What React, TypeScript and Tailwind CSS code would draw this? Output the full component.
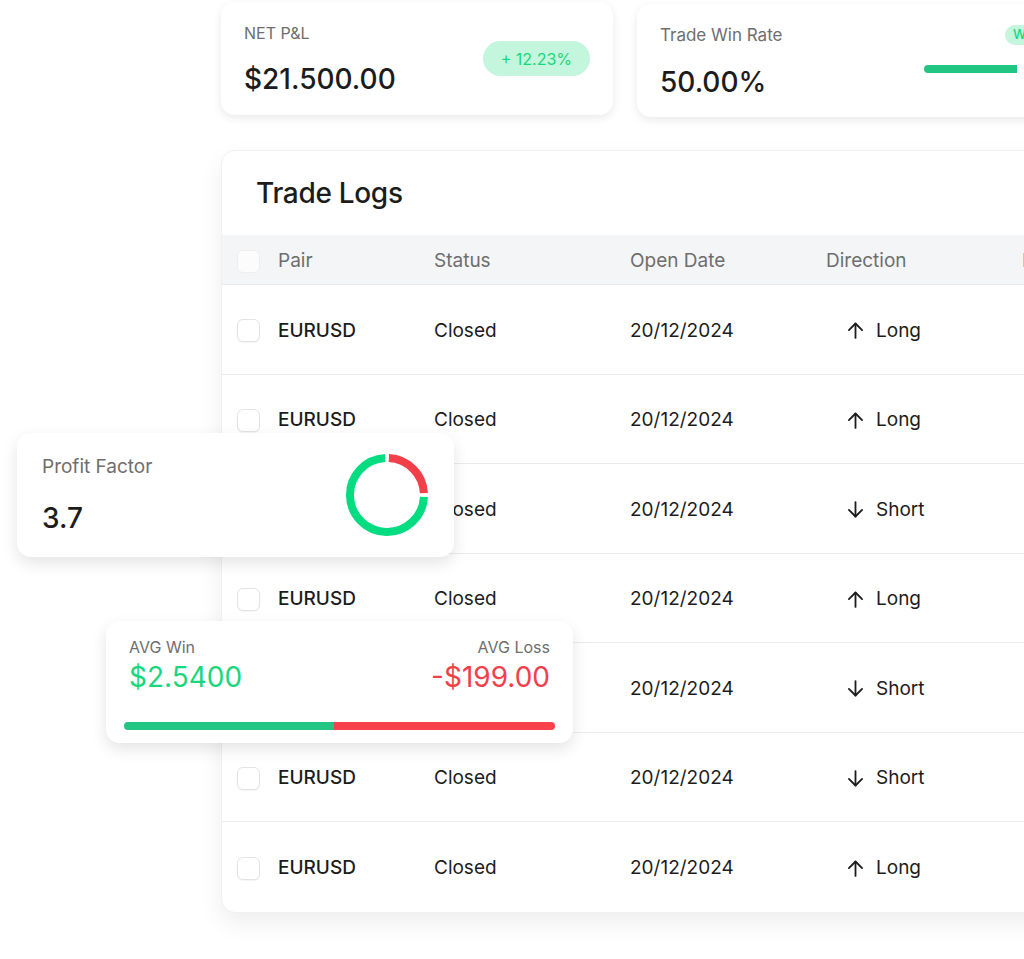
import React from 'react'

// ─── DATA ─────────────────────────────────────────────────────────────────────

interface Trade {
  id: number
  pair: string
  status: string
  openDate: string
  direction: 'long' | 'short'
}

const trades: Trade[] = [
  { id: 1, pair: 'EURUSD', status: 'Closed', openDate: '20/12/2024', direction: 'long' },
  { id: 2, pair: 'EURUSD', status: 'Closed', openDate: '20/12/2024', direction: 'long' },
  { id: 3, pair: 'EURUSD', status: 'Closed', openDate: '20/12/2024', direction: 'short' },
  { id: 4, pair: 'EURUSD', status: 'Closed', openDate: '20/12/2024', direction: 'long' },
  { id: 5, pair: 'EURUSD', status: 'Closed', openDate: '20/12/2024', direction: 'short' },
  { id: 6, pair: 'EURUSD', status: 'Closed', openDate: '20/12/2024', direction: 'short' },
  { id: 7, pair: 'EURUSD', status: 'Closed', openDate: '20/12/2024', direction: 'long' },
]

// ─── ICONS ────────────────────────────────────────────────────────────────────

function Arrow({ down }: { down?: boolean }) {
  return (
    <svg width="17" height="17" viewBox="0 0 16 16" fill="none" stroke="#1c1c1c"
      strokeWidth="1.7" strokeLinecap="round" strokeLinejoin="round"
      className={down ? 'rotate-180' : ''}>
      <path d="M8 1.5V15" />
      <path d="M1.8 7.6L8 1.4L14.2 7.6" />
    </svg>
  )
}

function Donut() {
  return (
    <svg width="84" height="84" viewBox="0 0 84 84" fill="none">
      <path d="M43.9 5.05 A37 37 0 0 1 78.95 40.1" stroke="#f2404a" strokeWidth="8" />
      <path d="M78.95 43.9 A37 37 0 1 1 40.1 5.05" stroke="#03dc80" strokeWidth="8" />
    </svg>
  )
}

function Checkbox() {
  return <div className="w-[23px] h-[23px] rounded-[6px] border border-[#e3e3e3] bg-white shadow-[0_1px_1px_rgba(0,0,0,0.04)]" />
}

// ─── PAGE ─────────────────────────────────────────────────────────────────────

export default function App() {
  return (
    <div className="relative w-[1024px] h-[959px] overflow-hidden bg-white text-[#1c1c1c]"
      style={{ fontFamily: 'Inter, "Noto Sans", sans-serif' }}>

      {/* MAIN COLUMN */}
      <div className="pl-[221px] pt-[2px]">

        {/* STAT CARDS */}
        <div className="flex gap-[24px]">
          <div className="w-[392px] h-[113px] shrink-0 rounded-[14px] bg-white shadow-[0_3px_10px_rgba(0,0,0,0.09)] px-[23px] pt-[21px] flex justify-between">
            <div>
              <p className="text-[16px] leading-[20px] text-[#6e6e6e]">NET P&amp;L</p>
              <p className="mt-[18px] text-[28px] leading-[36px] font-medium">$21.500.00</p>
            </div>
            <div className="mt-[18px] h-[35px] px-[18px] rounded-full bg-[#c4f6dd] text-[#17d67c] text-[16px] flex items-center">
              + 12.23%
            </div>
          </div>

          <div className="w-[460px] h-[113px] shrink-0 mt-[2px] rounded-[14px] bg-white shadow-[0_3px_10px_rgba(0,0,0,0.09)] px-[23px] pt-[21px] flex">
            <div className="w-[264px] shrink-0">
              <p className="text-[17px] leading-[20px] text-[#6e6e6e]">Trade Win Rate</p>
              <p className="mt-[19px] text-[28px] leading-[36px] font-medium">50.00%</p>
            </div>
            <div className="flex flex-col">
              <div className="ml-[81px] self-start h-[20px] px-[8px] rounded-full bg-[#c4f6dd] text-[#17d67c] text-[13px] font-medium flex items-center">Win</div>
              <div className="mt-[20px] flex gap-[8px]">
                <div className="w-[93px] h-[8px] rounded-l-full bg-[#22c683]" />
                <div className="w-[93px] h-[8px] rounded-r-full bg-[#f2404a]" />
              </div>
            </div>
          </div>
        </div>

        {/* TRADE LOGS */}
        <div className="mt-[33px] w-[900px] rounded-[14px] bg-white border border-[#f0f0f0] shadow-[0_10px_24px_rgba(0,0,0,0.07)] overflow-hidden">
          <h2 className="h-[84px] pl-[34px] flex items-center text-[28px] font-medium tracking-[-0.3px]">Trade Logs</h2>

          <div className="h-[50px] pt-[3px] bg-[#f4f5f6] border-b border-[#e9e9e9] flex items-center text-[19px] text-[#6e6e6e]">
            <div className="w-[56px] pl-[15px]"><div className="w-[23px] h-[23px] rounded-[6px] bg-white/70 border border-[#eeeeee]" /></div>
            <div className="w-[156px]">Pair</div>
            <div className="w-[196px]">Status</div>
            <div className="w-[196px]">Open Date</div>
            <div className="w-[196px]">Direction</div>
            <div>Profit</div>
          </div>

          {trades.map(t => (
            <div key={t.id} className="h-[89.5px] pt-[3px] border-b border-[#ebebeb] last:border-b-0 flex items-center text-[19px]">
              <div className="w-[56px] pl-[15px]"><Checkbox /></div>
              <div className="w-[156px] font-medium">{t.pair}</div>
              <div className="w-[196px]">{t.status}</div>
              <div className="w-[196px]">{t.openDate}</div>
              <div className="w-[196px] pl-[21px] flex items-center gap-[12px]">
                <Arrow down={t.direction === 'short'} />
                <span>{t.direction === 'long' ? 'Long' : 'Short'}</span>
              </div>
            </div>
          ))}
        </div>
      </div>

      {/* FLOATING: PROFIT FACTOR */}
      <div className="absolute left-[17px] top-[433px] w-[437px] h-[124px] rounded-[14px] bg-white shadow-[0_6px_16px_rgba(0,0,0,0.11)] pl-[25px] pr-[25px] flex items-center justify-between">
        <div className="mt-[1px]">
          <p className="text-[19px] leading-[22px] text-[#6e6e6e]">Profit Factor</p>
          <p className="mt-[22px] text-[28px] leading-[36px] font-medium">3.7</p>
        </div>
        <Donut />
      </div>

      {/* FLOATING: AVG WIN / LOSS */}
      <div className="absolute left-[106px] top-[621px] w-[467px] h-[122px] rounded-[14px] bg-white shadow-[0_6px_16px_rgba(0,0,0,0.11)] pt-[16px]">
        <div className="px-[23px] flex justify-between">
          <div>
            <p className="text-[16px] leading-[20px] text-[#6e6e6e]">AVG Win</p>
            <p className="mt-[2px] text-[28px] leading-[36px] text-[#1ad67c]">$2.5400</p>
          </div>
          <div className="text-right">
            <p className="text-[16px] leading-[20px] text-[#6e6e6e]">AVG Loss</p>
            <p className="mt-[2px] text-[28px] leading-[36px] text-[#f2404a]">-$199.00</p>
          </div>
        </div>
        <div className="mx-[18px] mt-[27px] h-[8px] rounded-full overflow-hidden flex">
          <div className="w-[210px] bg-[#22c683]" />
          <div className="flex-1 bg-[#f8424b]" />
        </div>
      </div>
    </div>
  )
}
